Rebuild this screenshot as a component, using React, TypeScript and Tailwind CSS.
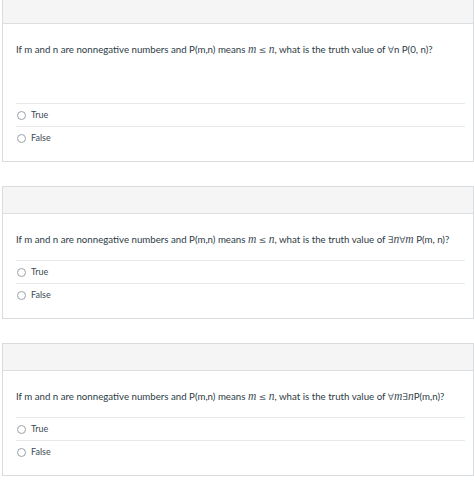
import React from 'react';

type Q = { id: number; extra?: boolean; tail: React.ReactNode };

const serif = '"Liberation Serif", "DejaVu Serif", serif';

const M = ({ children }: { children: React.ReactNode }) => (
    <span className="italic text-[11.5px] leading-none text-[#3a4750]" style={{ fontFamily: serif }}>{children}</span>
);
const S = ({ children }: { children: React.ReactNode }) => (
    <span className="text-[9px] leading-none text-[#5a656c]" style={{ fontFamily: '"DejaVu Sans", sans-serif' }}>{children}</span>
);

const questions: Q[] = [
    { id: 1, extra: true, tail: <><S>∀</S>n P(0, n)?</> },
    { id: 2, tail: <><S>∃</S><M>n</M><S>∀</S><M>m</M> P(m, n)?</> },
    { id: 3, tail: <><S>∀</S><M>m</M><S>∃</S><M>n</M>P(m,n)?</> },
];

function Answer({ label }: { label: string }) {
    return (
        <div className="flex items-center h-[23px] border-t border-[#e6e8ea]">
            <span className="ml-[1px] w-[9px] h-[9px] rounded-full border border-[#9aa1a6]"></span>
            <span className="ml-[5px] text-[9px] text-[#3d4a52]">{label}</span>
        </div>
    );
}

function QuestionCard({ q }: { q: Q }) {
    return (
        <div className="ml-[2px] border border-[#d9dcde] bg-white">
            <div className="h-[27px] bg-[#f5f5f5] border-b border-[#dcdfe1]"></div>
            <div className="px-[13px] pt-[17px]">
                <p className="h-[16px] text-[9.7px] leading-[16px] text-[#2d3b45] whitespace-nowrap">
                    If m and n are nonnegative numbers and P(m,n) means <M>m</M> <S>≤</S> <M>n</M>, what is the truth value of {q.tail}
                </p>
                {q.extra && <div className="h-[33px]"></div>}
            </div>
            <div className="ml-[13px] mr-[8px] mt-[13px] mb-[12px]">
                <Answer label="True" />
                <Answer label="False" />
            </div>
        </div>
    );
}

export default function App() {
    return (
        <div className="w-[474px] h-[488px] overflow-hidden bg-white" style={{ fontFamily: 'Lato, "Open Sans", sans-serif' }}>
            <div className="-mt-[4px] flex flex-col gap-[24px] w-[474px]">
                {questions.map(q => <QuestionCard key={q.id} q={q} />)}
            </div>
        </div>
    );
}
